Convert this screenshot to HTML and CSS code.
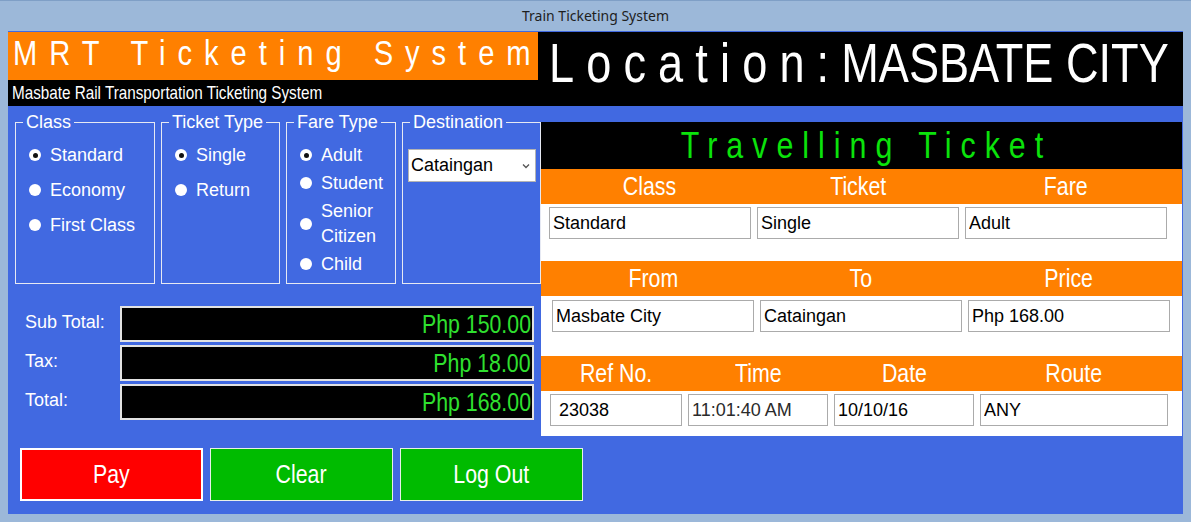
FILE: index.html
```html
<!DOCTYPE html>
<html lang="en">
<head>
<meta charset="utf-8">
<title>Train Ticketing System</title>
<link rel="stylesheet" href="styles.css">
</head>
<body>
<div class="window">
  <div class="titlebar">Train Ticketing System</div>
  <div class="client">
    <header class="header">
      <div class="brand">
        <div class="brand-title"><span class="nar">MRT Ticketing Syste<span class="ls0">m</span></span></div>
        <div class="brand-sub"><span class="nar">Masbate Rail Transportation Ticketing System</span></div>
      </div>
      <div class="location"><span class="nar"><span class="loc-label">Location:</span>MASBATE CITY</span></div>
    </header>

    <div class="main">
      <div class="left">
        <div class="groups">
          <fieldset class="group g-class">
            <legend>Class</legend>
            <ul class="opts">
              <li class="opt"><span class="radio checked"></span><span>Standard</span></li>
              <li class="opt"><span class="radio"></span><span>Economy</span></li>
              <li class="opt"><span class="radio"></span><span>First Class</span></li>
            </ul>
          </fieldset>
          <fieldset class="group g-ticket">
            <legend>Ticket Type</legend>
            <ul class="opts">
              <li class="opt"><span class="radio checked"></span><span>Single</span></li>
              <li class="opt"><span class="radio"></span><span>Return</span></li>
            </ul>
          </fieldset>
          <fieldset class="group g-fare">
            <legend>Fare Type</legend>
            <ul class="opts opts-fare">
              <li class="opt"><span class="radio checked"></span><span>Adult</span></li>
              <li class="opt"><span class="radio"></span><span>Student</span></li>
              <li class="opt"><span class="radio"></span><span>Senior Citizen</span></li>
              <li class="opt"><span class="radio"></span><span>Child</span></li>
            </ul>
          </fieldset>
          <fieldset class="group g-dest">
            <legend>Destination</legend>
            <div class="select">
              <span>Cataingan</span>
              <svg class="chev" width="8" height="6" viewBox="0 0 8 6"><path d="M1 1.5 L4 4.5 L7 1.5" fill="none" stroke="#555" stroke-width="1.3"/></svg>
            </div>
          </fieldset>
        </div>

        <div class="totals">
          <div class="trow"><span class="tlabel">Sub Total:</span><div class="tbox"><span class="nar nar-r">Php 150.00</span></div></div>
          <div class="trow"><span class="tlabel">Tax:</span><div class="tbox"><span class="nar nar-r">Php 18.00</span></div></div>
          <div class="trow"><span class="tlabel">Total:</span><div class="tbox"><span class="nar nar-r">Php 168.00</span></div></div>
        </div>
      </div>

      <section class="ticket">
        <div class="ticket-title"><span class="nar nar-c">Travelling Ticket</span></div>

        <div class="hdr cols3 pad8"><span><span class="nar nar-c">Class</span></span><span><span class="nar nar-c">Ticket</span></span><span><span class="nar nar-c">Fare</span></span></div>
        <div class="fields cols3 pad8 r1">
          <input class="field" readonly value="Standard">
          <input class="field" readonly value="Single">
          <input class="field" readonly value="Adult">
        </div>

        <div class="hdr cols3 pad11 h2"><span><span class="nar nar-c">From</span></span><span><span class="nar nar-c">To</span></span><span><span class="nar nar-c">Price</span></span></div>
        <div class="fields cols3 pad11 r2">
          <input class="field" readonly value="Masbate City">
          <input class="field" readonly value="Cataingan">
          <input class="field" readonly value="Php 168.00">
        </div>

        <div class="hdr cols4 h3"><span><span class="nar nar-c">Ref No.</span></span><span><span class="nar nar-c">Time</span></span><span><span class="nar nar-c">Date</span></span><span><span class="nar nar-c">Route</span></span></div>
        <div class="fields cols4 r3">
          <input class="field ref" readonly value="23038">
          <input class="field time" readonly value="11:01:40 AM">
          <input class="field" readonly value="10/10/16">
          <input class="field" readonly value="ANY">
        </div>
      </section>
    </div>

    <div class="buttons">
      <button class="btn pay"><span class="nar nar-c">Pay</span></button>
      <button class="btn go"><span class="nar nar-c">Clear</span></button>
      <button class="btn go"><span class="nar nar-c">Log Out</span></button>
    </div>
  </div>
</div>
</body>
</html>
```

FILE: styles.css
```css
* { box-sizing: border-box; }

html, body {
  margin: 0;
  padding: 0;
  background: #9cb8d9;
}

.window {
  width: 1191px;
  height: 522px;
  background: #9cb8d9;
  border-top: 1px solid #7f9fc6;
  font-family: "Liberation Sans", Arial, sans-serif;
  overflow: hidden;
}

.titlebar {
  height: 30px;
  line-height: 30px;
  text-align: center;
  font-family: "Noto Sans", "Open Sans", sans-serif;
  font-size: 14px;
  color: #1e1e1e;
}

.client {
  margin: 0 8px;
  width: 1175px;
  height: 483px;
  background: #4169e1;
  overflow: hidden;
}

/* narrow (Arial Narrow look) text */
.nar {
  display: inline-block;
  white-space: nowrap;
  transform: scaleX(0.82);
  transform-origin: left center;
}
.nar-c { transform-origin: center center; }
.nar-r { transform-origin: right center; }

/* ---------- header ---------- */
.header {
  display: flex;
  margin-top: 1px;
  height: 74px;
}

.brand {
  width: 530px;
  display: flex;
  flex-direction: column;
}

.brand-title {
  height: 48px;
  background: #ff8000;
  color: #fff;
  font-size: 35.5px;
  line-height: 42px;
  letter-spacing: 14.6px;
  padding-left: 5px;
  white-space: nowrap;
}

.brand-title .nar { margin-right: -130px; }
.ls0 { letter-spacing: 0; }

.brand-sub {
  height: 26px;
  background: #000;
  color: #fff;
  font-size: 18.6px;
  line-height: 26px;
  padding-left: 4px;
  white-space: nowrap;
}

.brand-sub .nar { margin-right: -70px; }

.location {
  flex: 1;
  min-width: 0;
  background: #000;
  color: #fff;
  font-size: 55px;
  line-height: 62px;
  padding-left: 11px;
  white-space: nowrap;
}

.location .nar { margin-right: -140px; }
.loc-label { letter-spacing: 14.8px; }

/* ---------- main ---------- */
.main {
  display: flex;
  align-items: flex-start;
  height: 330px;
}

.left {
  width: 533px;
  padding: 6px 0 0 7px;
}

.groups {
  display: flex;
  gap: 6px;
}

.group {
  margin: 0;
  padding: 0;
  min-width: 0;
  height: 172px;
  border: 1px solid #e6e9f3;
  color: #fff;
  font-size: 18px;
}

.g-class { width: 140px; }
.g-ticket { width: 119px; }
.g-fare { width: 110px; }
.g-dest { width: 139px; }

.group legend {
  margin-left: 7px;
  padding: 0 3px;
  line-height: 20px;
  font-size: 18px;
  color: #fff;
}

.opts {
  list-style: none;
  margin: 0;
  padding: 5.5px 0 0 13px;
}

.opt {
  display: flex;
  align-items: center;
  gap: 9px;
  height: 35px;
  line-height: 20px;
}

.opts-fare { padding-top: 9px; }
.opts-fare .opt {
  height: auto;
  padding: 1.5px 0;
  line-height: 25px;
}

.radio {
  flex: 0 0 12px;
  width: 12px;
  height: 12px;
  border-radius: 50%;
  background: #fff;
  display: flex;
  align-items: center;
  justify-content: center;
}

.radio.checked::after {
  content: "";
  width: 5px;
  height: 5px;
  border-radius: 50%;
  background: #111;
}

.select {
  margin: 17px 0 0 5px;
  width: 128px;
  height: 33px;
  background: #fff;
  border: 1px solid #b4b4b4;
  color: #000;
  font-size: 18px;
  display: flex;
  align-items: center;
  justify-content: space-between;
  padding: 0 5px 0 2px;
}

.chev { display: block; }

/* ---------- totals ---------- */
.totals {
  margin-top: 22px;
  padding-left: 10px;
  display: flex;
  flex-direction: column;
  gap: 3px;
}

.trow {
  display: flex;
  align-items: flex-start;
}

.tlabel {
  width: 95px;
  padding-top: 5.5px;
  color: #fff;
  font-size: 18px;
  line-height: 20px;
}

.tbox {
  width: 414px;
  height: 36px;
  background: #000;
  border: 2px solid #e2e2e2;
  color: #2fe02f;
  text-align: right;
  font-size: 26px;
  line-height: 32px;
  padding-right: 1px;
  overflow: hidden;
}

/* ---------- ticket panel ---------- */
.ticket {
  margin-top: 16px;
  width: 641px;
  background: #fff;
  padding-bottom: 10px;
}

.ticket-title {
  height: 47px;
  background: #000;
  color: #0be30b;
  text-align: center;
  font-size: 37px;
  line-height: 47px;
  letter-spacing: 11px;
  padding-left: 9px;
  white-space: nowrap;
}

.hdr {
  height: 35px;
  background: #ff8000;
  color: #fff;
  font-size: 26px;
  line-height: 35px;
  text-align: center;
}

.cols3 {
  display: grid;
  grid-template-columns: 202px 202px 202px;
  column-gap: 6px;
}

.cols4 {
  display: grid;
  grid-template-columns: 132px 140px 140px 188px;
  column-gap: 6px;
  padding-left: 9px;
}

.pad8 { padding-left: 8px; }
.pad11 { padding-left: 11px; }

.fields { padding-top: 3px; }
.r2 { padding-top: 4px; }

.h2 { margin-top: 22px; }
.h3 { margin-top: 24px; }

.field {
  display: block;
  width: 100%;
  height: 32px;
  margin: 0;
  border: 1px solid #ababab;
  border-radius: 0;
  background: #fff;
  color: #000;
  font-family: "Liberation Sans", Arial, sans-serif;
  font-size: 18px;
  padding: 0 3px;
  outline: none;
}

.field.ref { padding-left: 8px; }
.field.time { color: #2a2a2a; }

/* ---------- buttons ---------- */
.buttons {
  display: flex;
  gap: 7px;
  margin-top: 12px;
  padding-left: 12px;
}

.btn {
  width: 183px;
  height: 53px;
  margin: 0;
  color: #fff;
  font-family: "Liberation Sans", Arial, sans-serif;
  font-size: 26px;
  border-radius: 0;
  padding: 0;
  cursor: pointer;
}

.btn.pay {
  background: #ff0000;
  border: 2px solid #ffffff;
}

.btn.go {
  background: #00bb00;
  border: 1px solid #e8f0e8;
}
```
